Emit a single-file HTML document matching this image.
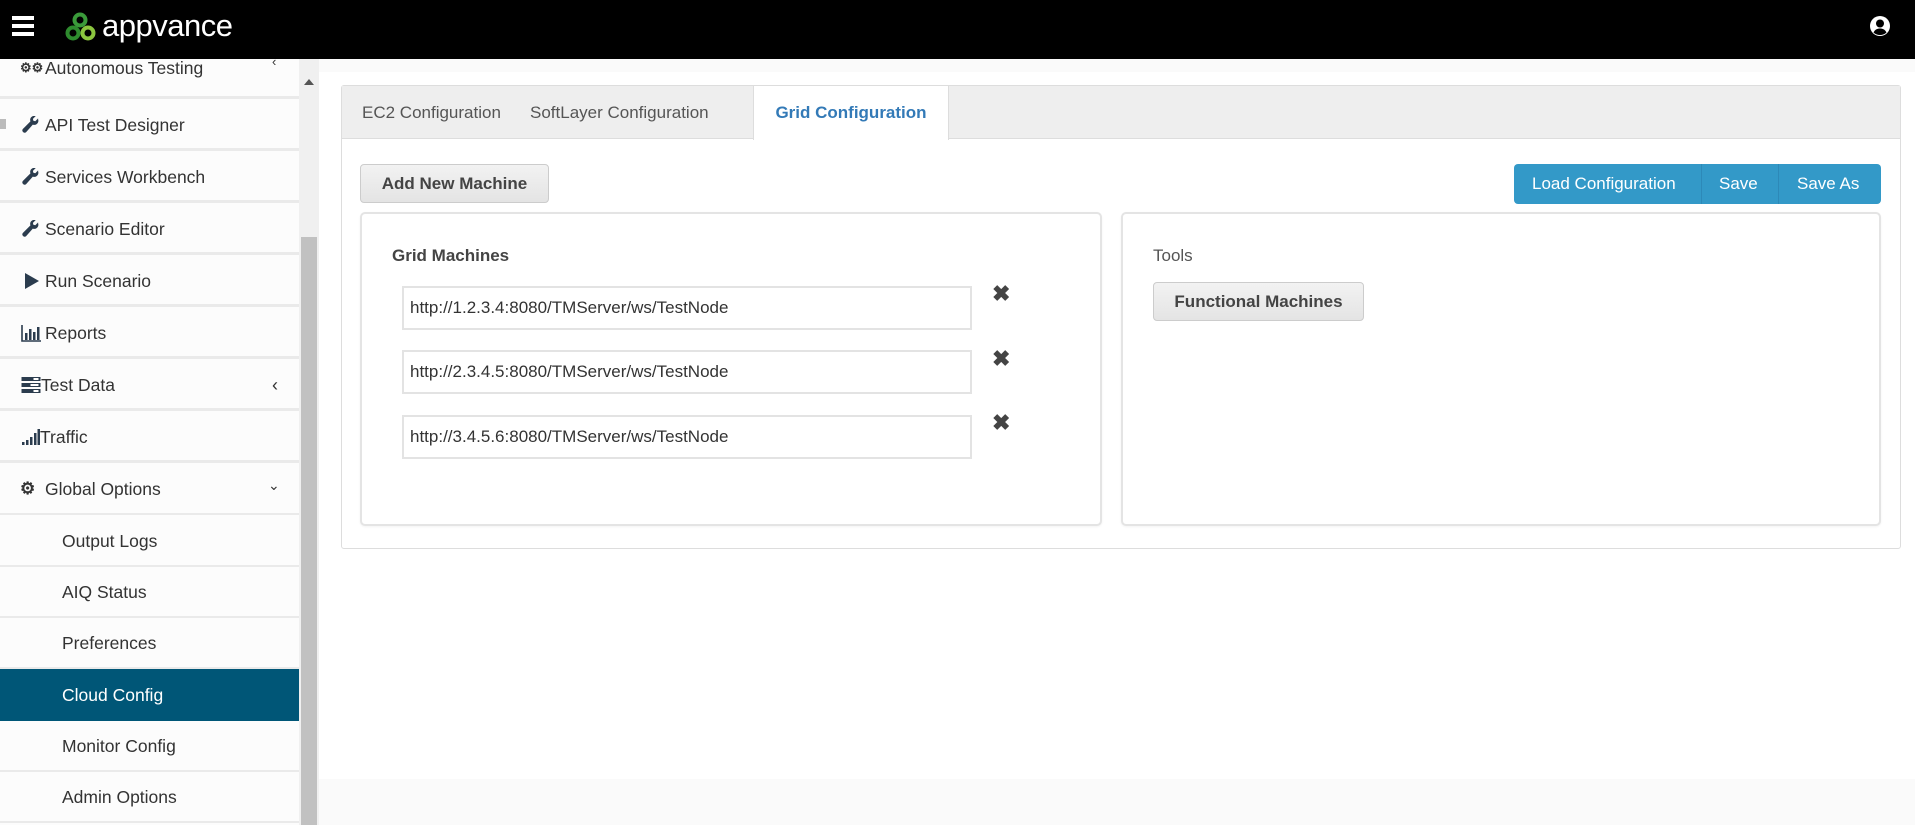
<!DOCTYPE html>
<html><head><meta charset="utf-8"><style>
*{box-sizing:border-box;margin:0;padding:0}
body{width:1915px;height:825px;overflow:hidden;font-family:"Liberation Sans",sans-serif;background:#fff;position:relative}
.hdr{position:absolute;left:0;top:0;width:1915px;height:59px;background:#000}
.side{position:absolute;left:0;top:59px;width:299px;height:766px;background:#fcfcfc;overflow:hidden}
.row{position:absolute;left:0;width:299px;height:52px;border-bottom:3px solid #eaeaea;color:#333;font-size:17.5px;line-height:52px}
.row.sub{padding-left:62px;border-bottom-width:2px}
.row .ic{position:absolute;left:20px;top:0;width:22px;color:#333}
.row svg.ic{top:17px}
.row .t{position:absolute;left:45px}
.sb{position:absolute;left:299px;top:59px;width:20px;height:766px;background:#f0f0f0}
.abs{position:absolute}
.panel{position:absolute;left:341px;top:85px;width:1560px;height:464px;border:1px solid #ddd;border-radius:3px;background:#fff}
.tabs{position:absolute;left:0;top:0;width:1558px;height:53px;background:#eee;border-bottom:1px solid #ddd}
.tab{position:absolute;top:0;height:53px;line-height:53px;font-size:17px;color:#555}
.btn{position:absolute;background:linear-gradient(#f2f2f2,#e4e4e4);border:1px solid #ccc;border-radius:4px;font-weight:bold;color:#444;font-size:17px;text-align:center}
.card{position:absolute;border:2px solid #e4e4e4;border-radius:5px;background:#fff;box-shadow:0 1px 2px rgba(0,0,0,.05)}
.inp{position:absolute;left:402px;width:570px;height:44px;border:2px solid #e3e3e3;font-size:17px;color:#333;line-height:40px;padding-left:6px}
.x{position:absolute;left:992px;font-size:22px;color:#444;font-weight:bold}
</style></head><body>
<svg width="0" height="0" style="position:absolute"><defs><symbol id="wr" viewBox="0 0 20 20"><path d="M17.5 2.5l-3 3-2-.5-.5-2 3-3c-2.5-.8-5.2.6-5.8 3.1-.2.9-.1 1.8.2 2.6L1.5 13.6c-.9.9-.9 2.2 0 3.1l.3.3c.9.9 2.2.9 3.1 0l7-7.9c.8.3 1.7.4 2.6.2 2.5-.6 3.9-3.3 3-5.8z" fill="#2b3c4e"/></symbol></defs></svg>
<div class="hdr">
 <div class="abs" style="left:12px;top:16px;width:22px;height:4px;background:#fff;box-shadow:0 8px 0 #fff,0 16px 0 #fff"></div>
 <svg class="abs" style="left:64px;top:12px" width="34" height="30" viewBox="0 0 34 30"><circle cx="16" cy="8" r="5.5" fill="none" stroke="#3a9a3a" stroke-width="4"/><circle cx="9" cy="21" r="5.5" fill="none" stroke="#2e8b2e" stroke-width="4"/><circle cx="24" cy="21" r="5.5" fill="none" stroke="#8cc63f" stroke-width="4"/></svg>
 <div class="abs" style="left:102px;top:8px;color:#fff;font-size:31px;letter-spacing:-0.5px">appvance</div>
 <svg class="abs" style="left:1869px;top:15px" width="22" height="22" viewBox="0 0 22 22"><circle cx="11" cy="11" r="10" fill="#fff"/><circle cx="11" cy="8.5" r="4" fill="#000"/><path d="M4.5 17.5c1.5-3 3.8-4 6.5-4s5 1 6.5 4c-1.8 1.7-4 2.5-6.5 2.5s-4.7-.8-6.5-2.5z" fill="#000"/></svg>
</div>
<div class="abs" style="left:319px;top:59px;width:1596px;height:13px;background:#fafafa"></div>
<div class="abs" style="left:319px;top:779px;width:1596px;height:46px;background:#fafafa"></div>
<div class="side">
 <div class="row" style="top:-10px;line-height:38px;height:50px"><span class="ic" style="font-size:13px;font-weight:bold">⚙⚙</span><span class="t">Autonomous Testing</span><span class="abs" style="left:272px;top:-6px;font-size:13px">‹</span></div>
 <div class="abs" style="left:0;top:60px;width:6px;height:10px;background:#bbb;z-index:2"></div>
 <div class="row" style="top:40px"><svg class="ic" width="19" height="19"><use href="#wr"/></svg><span class="t">API Test Designer</span></div>
 <div class="row" style="top:92px"><svg class="ic" width="19" height="19"><use href="#wr"/></svg><span class="t">Services Workbench</span></div>
 <div class="row" style="top:144px"><svg class="ic" width="19" height="19"><use href="#wr"/></svg><span class="t">Scenario Editor</span></div>
 <div class="row" style="top:196px"><svg class="ic" width="18" height="18" viewBox="0 0 18 18"><path d="M3 1l14 8-14 8z" fill="#2b3c4e"/></svg><span class="t">Run Scenario</span></div>
 <div class="row" style="top:248px"><svg class="ic" width="20" height="18" viewBox="0 0 20 18"><path d="M1 1v16h19" fill="none" stroke="#2b3c4e" stroke-width="1.6"/><rect x="4" y="9" width="2.5" height="7" fill="#2b3c4e"/><rect x="8" y="5" width="2.5" height="11" fill="#2b3c4e"/><rect x="12" y="8" width="2.5" height="8" fill="#2b3c4e"/><rect x="16" y="3" width="2.5" height="13" fill="#2b3c4e"/></svg><span class="t">Reports</span></div>
 <div class="row" style="top:300px"><svg class="ic" width="19" height="17" viewBox="0 0 19 17" style="top:18px"><rect x="0" y="0" width="19" height="4" fill="#2b3c4e"/><rect x="0" y="6" width="19" height="4" fill="#2b3c4e"/><rect x="0" y="12" width="19" height="4" fill="#2b3c4e"/><rect x="12" y="1" width="5" height="2" fill="#fff"/><rect x="9" y="7" width="8" height="2" fill="#fff"/><rect x="12" y="13" width="5" height="2" fill="#fff"/></svg><span class="t" style="left:41px">Test Data</span><span class="abs" style="left:272px;font-size:18px">‹</span></div>
 <div class="row" style="top:352px"><svg class="ic" width="18" height="16" viewBox="0 0 18 16" style="top:18px"><rect x="0" y="13" width="2.5" height="3" fill="#2b3c4e"/><rect x="4" y="11" width="2.5" height="5" fill="#2b3c4e"/><rect x="8" y="8" width="2.5" height="8" fill="#2b3c4e"/><rect x="12" y="4" width="2.5" height="12" fill="#2b3c4e"/><rect x="15.5" y="0" width="2.5" height="16" fill="#2b3c4e"/></svg><span class="t" style="left:40px">Traffic</span></div>
 <div class="row" style="top:404px;border-bottom-width:2px"><span class="ic" style="font-size:17px;font-weight:bold">⚙</span><span class="t">Global Options</span><span class="abs" style="left:268px;top:-4px;font-size:14px">⌄</span></div>
 <div class="row sub" style="top:456px">Output Logs</div>
 <div class="row sub" style="top:507px">AIQ Status</div>
 <div class="row sub" style="top:558px">Preferences</div>
 <div class="row sub" style="top:610px;background:#005677;color:#fff;border-bottom-color:#005677">Cloud Config</div>
 <div class="row sub" style="top:661px">Monitor Config</div>
 <div class="row sub" style="top:712px">Admin Options</div>
</div>
<div class="sb"><div class="abs" style="left:5px;top:20px;border:5px solid transparent;border-bottom:6px solid #555;border-top:0;width:0"></div><div class="abs" style="left:2px;top:178px;width:16px;height:588px;background:#c1c1c1"></div></div>
<div class="panel">
 <div class="tabs">
  <div class="tab" style="left:20px">EC2 Configuration</div>
  <div class="tab" style="left:188px">SoftLayer Configuration</div>
  <div class="tab" style="left:411px;width:196px;height:54px;background:#fff;border-left:1px solid #ddd;border-right:1px solid #ddd;text-align:center;color:#337ab7;font-weight:bold">Grid Configuration</div>
 </div>
</div>
<div class="btn" style="left:360px;top:164px;width:189px;height:39px;line-height:37px">Add New Machine</div>
<div class="abs" style="left:1514px;top:164px;width:367px;height:40px;background:#3399c8;border-radius:4px;color:#fff;font-size:17px;line-height:40px">
 <span class="abs" style="left:18px">Load Configuration</span>
 <div class="abs" style="left:187px;top:0;width:1px;height:40px;background:#2d89b8"></div>
 <span class="abs" style="left:205px">Save</span>
 <div class="abs" style="left:264px;top:0;width:1px;height:40px;background:#2d89b8"></div>
 <span class="abs" style="left:283px">Save As</span>
</div>
<div class="card" style="left:360px;top:212px;width:742px;height:314px"></div>
<div class="card" style="left:1121px;top:212px;width:760px;height:314px"></div>
<div class="abs" style="left:392px;top:246px;font-size:17px;font-weight:bold;color:#444">Grid Machines</div>
<div class="inp" style="top:286px">http://1.2.3.4:8080/TMServer/ws/TestNode</div>
<div class="inp" style="top:350px">http://2.3.4.5:8080/TMServer/ws/TestNode</div>
<div class="inp" style="top:415px">http://3.4.5.6:8080/TMServer/ws/TestNode</div>
<div class="x" style="top:281px">✖</div>
<div class="x" style="top:346px">✖</div>
<div class="x" style="top:410px">✖</div>
<div class="abs" style="left:1153px;top:246px;font-size:17px;color:#555">Tools</div>
<div class="btn" style="left:1153px;top:282px;width:211px;height:39px;line-height:37px">Functional Machines</div>
</body></html>
